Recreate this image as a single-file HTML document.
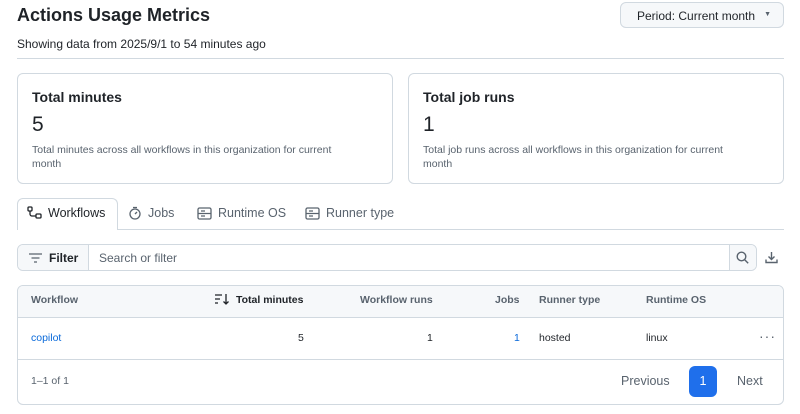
<!DOCTYPE html>
<html><head><meta charset="utf-8"><style>
*{box-sizing:border-box;margin:0;padding:0}
body{width:800px;height:414px;background:#fff;font-family:"Liberation Sans",Arial,sans-serif;color:#1f2328;position:relative;overflow:hidden}
.a{position:absolute}
.card{position:absolute;border:1px solid #d1d9e0;border-radius:6px;top:73px;height:111px}
.card h3{position:absolute;left:14px;top:15px;font-size:14px;font-weight:bold}
.card .n{position:absolute;left:14px;top:39px;font-size:21px}
.card p{position:absolute;left:14px;top:69px;font-size:10.5px;line-height:14px;color:#59636e;width:325px}
.tab{position:absolute;top:206px;font-size:12.5px;color:#59636e;display:flex;align-items:center;gap:6px}
.th{position:absolute;top:294px;font-size:10.5px;font-weight:bold;color:#59636e}
.td{position:absolute;top:332px;font-size:10.5px}
</style></head><body>
<div class="a" style="left:17px;top:5px;font-size:18px;font-weight:bold">Actions Usage Metrics</div>
<div class="a" style="left:620px;top:2px;width:164px;height:26px;border:1px solid #d1d9e0;border-radius:6px;background:#f6f8fa;font-size:12px;padding:6px 0 0 16px">Period: Current month <span style="position:absolute;right:12px;top:8px;font-size:7px;color:#59636e">▼</span></div>
<div class="a" style="left:17px;top:37px;font-size:12px">Showing data from 2025/9/1 to 54 minutes ago</div>
<div class="a" style="left:17px;top:58px;width:767px;height:1px;background:#d1d9e0"></div>
<div class="card" style="left:17px;width:376px"><h3>Total minutes</h3><div class="n">5</div><p>Total minutes across all workflows in this organization for current month</p></div>
<div class="card" style="left:408px;width:376px"><h3>Total job runs</h3><div class="n">1</div><p>Total job runs across all workflows in this organization for current month</p></div>
<div class="a" style="left:17px;top:229px;width:767px;height:1px;background:#d1d9e0"></div>
<div class="a" style="left:17px;top:198px;width:101px;height:32px;border:1px solid #d1d9e0;border-bottom:none;border-radius:6px 6px 0 0;background:#fff"></div>
<div class="tab" style="left:27px;color:#1f2328"><svg width="15" height="14" viewBox="0 0 15 14" fill="none" stroke="#1f2328" stroke-width="1.3"><rect x="1" y="1" width="4" height="4" rx="1"/><rect x="9" y="8" width="5" height="4" rx="1"/><path d="M3 5v3a2 2 0 0 0 2 2h4"/></svg>Workflows</div>
<div class="tab" style="left:128px"><svg width="14" height="14" viewBox="0 0 14 14" fill="none" stroke="#59636e" stroke-width="1.3"><circle cx="7" cy="8" r="5"/><path d="M5 1.5h4M7 8l2-2"/></svg>Jobs</div>
<div class="tab" style="left:197px"><svg width="15" height="13" viewBox="0 0 15 13" fill="none" stroke="#59636e" stroke-width="1.3"><rect x="1" y="1" width="13" height="11" rx="1.5"/><path d="M1 6.5h13M4 4h4M4 9h4"/></svg>Runtime OS</div>
<div class="tab" style="left:305px"><svg width="15" height="13" viewBox="0 0 15 13" fill="none" stroke="#59636e" stroke-width="1.3"><rect x="1" y="1" width="13" height="11" rx="1.5"/><path d="M1 6.5h13M4 4h4M4 9h4"/></svg>Runner type</div>
<div class="a" style="left:17px;top:244px;width:740px;height:27px;border:1px solid #d1d9e0;border-radius:6px;overflow:hidden">
<div class="a" style="left:0;top:0;width:71px;height:25px;background:#f6f8fa;border-right:1px solid #d1d9e0;font-size:12px;font-weight:bold;padding:6px 0 0 31px">Filter</div>
<svg class="a" style="left:11px;top:8px" width="13" height="10" viewBox="0 0 13 10" stroke="#59636e" stroke-width="1.3"><path d="M0 1h13M2.5 5h8M5 9h3"/></svg>
<div class="a" style="left:81px;top:6px;font-size:12px;color:#59636e">Search or filter</div>
<div class="a" style="right:0;top:0;width:27px;height:25px;background:#f6f8fa;border-left:1px solid #d1d9e0"></div>
<svg class="a" style="right:7px;top:6px" width="13" height="13" viewBox="0 0 13 13" fill="none" stroke="#59636e" stroke-width="1.4"><circle cx="5.5" cy="5.5" r="4.3"/><path d="M8.7 8.7l3.5 3.5"/></svg>
</div>
<svg class="a" style="left:765px;top:251px" width="13" height="13" viewBox="0 0 13 13" fill="none" stroke="#59636e" stroke-width="1.4"><path d="M6.5 1v7M3.5 5.5l3 3 3-3M1 8.5v3h11v-3"/></svg>
<div class="a" style="left:17px;top:285px;width:767px;height:120px;border:1px solid #d1d9e0;border-radius:6px;overflow:hidden">
<div class="a" style="left:0;top:0;width:767px;height:32px;background:#f6f8fa;border-bottom:1px solid #d1d9e0"></div>
<div class="a" style="left:0;top:73px;width:767px;height:1px;background:#d1d9e0"></div>
</div>
<div class="th" style="left:31px">Workflow</div>
<svg class="a" style="left:215px;top:294px" width="15" height="11" viewBox="0 0 15 11" stroke="#1f2328" stroke-width="1.3" fill="none"><path d="M0 1h7M0 5h5M0 9h3M11 0v10M8.5 7.5l2.5 2.5 2.5-2.5"/></svg>
<div class="th" style="left:236px;color:#1f2328">Total minutes</div>
<div class="th" style="left:360px">Workflow runs</div>
<div class="th" style="left:495px">Jobs</div>
<div class="th" style="left:539px">Runner type</div>
<div class="th" style="left:646px">Runtime OS</div>
<div class="td" style="left:31px;color:#0969da">copilot</div>
<div class="td" style="left:298px">5</div>
<div class="td" style="left:427px">1</div>
<div class="td" style="left:514px;color:#0969da">1</div>
<div class="td" style="left:539px">hosted</div>
<div class="td" style="left:646px">linux</div>
<div class="a" style="left:759px;top:328px;font-size:14px;color:#59636e;letter-spacing:1px">···</div>
<div class="a" style="left:31px;top:375px;font-size:10.5px;color:#59636e">1–1 of 1</div>
<div class="a" style="left:621px;top:374px;font-size:12.5px;color:#59636e">Previous</div>
<div class="a" style="left:689px;top:366px;width:28px;height:31px;background:#1f6feb;border-radius:6px;color:#fff;font-size:12.5px;text-align:center;padding-top:8px">1</div>
<div class="a" style="left:737px;top:374px;font-size:12.5px;color:#59636e">Next</div>
</body></html>
